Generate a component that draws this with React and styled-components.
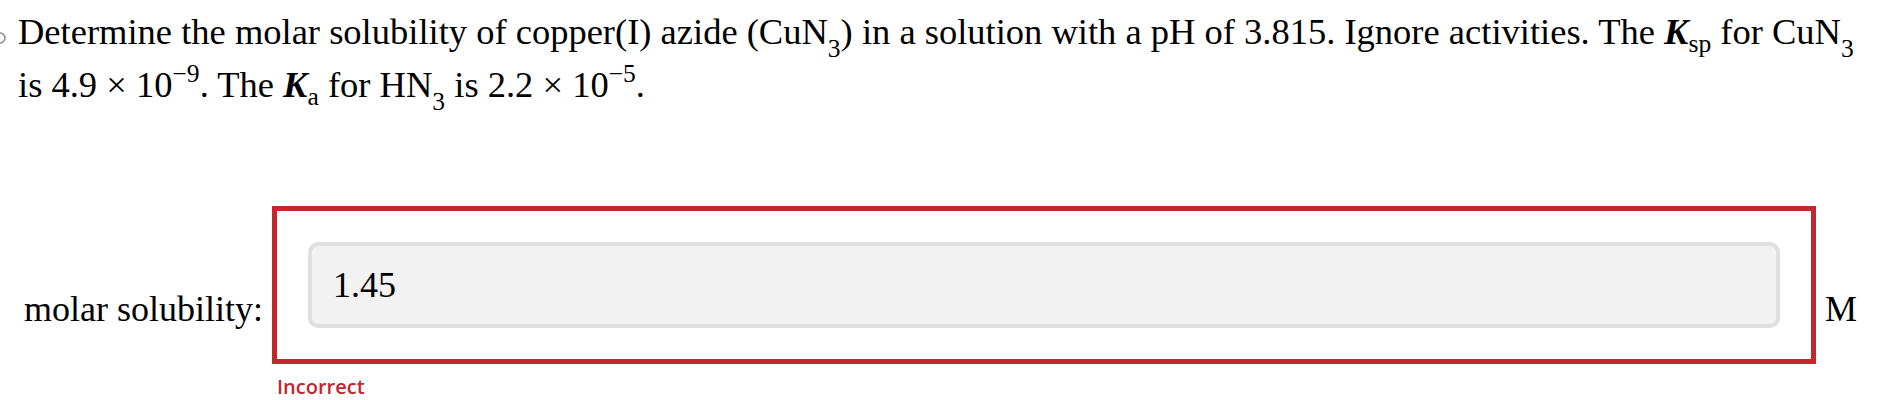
import React from "react";
import styled, { createGlobalStyle } from "styled-components";

const GlobalStyle = createGlobalStyle`
  html, body {
    margin: 0;
    padding: 0;
    background: #ffffff;
  }
  body {
    font-family: "Liberation Serif", "Times New Roman", serif;
    color: #000000;
  }
`;

const Page = styled.div`
  width: 1878px;
  height: 400px;
  box-sizing: border-box;
  padding: 5px 21px 0 14px;
  overflow: hidden;
`;

const Question = styled.p`
  position: relative;
  margin: 0 0 0 4px;
  font-size: 36.5px;
  line-height: 53px;
`;

const Marker = styled.svg`
  position: absolute;
  left: -18px;
  top: 26px;
`;

const K = styled.i`
  font-weight: bold;
`;

const Sub = styled.sub`
  font-size: 0.7em;
  line-height: 0;
  vertical-align: ${(props) => (props.$low ? "-0.5em" : "-0.3em")};
`;

const Sup = styled.sup`
  font-size: 0.7em;
  line-height: 0;
  vertical-align: 0.6em;
`;

const AnswerRow = styled.div`
  display: flex;
  align-items: flex-start;
  margin-top: 95px;
`;

const Label = styled.label`
  margin: 85px 9px 0 10px;
  font-size: 36px;
  line-height: 36px;
  white-space: nowrap;
`;

const Field = styled.div`
  flex: 1;
  display: flex;
  flex-direction: column;
`;

const Frame = styled.div`
  border: 5px solid #c1272d;
  padding: 31px;
`;

const Input = styled.div`
  height: 86px;
  box-sizing: border-box;
  border: 4px solid #dfdfdf;
  border-radius: 10px;
  background: #f2f2f2;
  padding-left: 21px;
  display: flex;
  align-items: center;
  font-size: 36px;
`;

const Feedback = styled.div`
  margin-top: 9px;
  padding-left: 5px;
  font-family: "Open Sans", "Liberation Sans", sans-serif;
  font-weight: 600;
  font-size: 20px;
  line-height: 28px;
  color: #c1272d;
`;

const Unit = styled.span`
  margin: 85px 0 0 9px;
  font-size: 36px;
  line-height: 36px;
`;

export default function App() {
  return (
    <>
      <GlobalStyle />
      <Page>
        <Question>
          <Marker width="6" height="14" viewBox="0 0 6 14">
            <circle cx="0" cy="7" r="5" fill="none" stroke="#8a8a8a" strokeWidth="1.5" />
          </Marker>
          Determine the molar solubility of copper(I) azide (CuN<Sub $low>3</Sub>) in a
          solution with a pH of 3.815. Ignore activities. The <K>K</K>
          <Sub>sp</Sub> for CuN<Sub $low>3</Sub> is 4.9 × 10<Sup>−9</Sup>. The{" "}
          <K>K</K>
          <Sub>a</Sub> for HN<Sub $low>3</Sub> is 2.2 × 10<Sup>−5</Sup>.
        </Question>
        <AnswerRow>
          <Label>molar solubility:</Label>
          <Field>
            <Frame>
              <Input>1.45</Input>
            </Frame>
            <Feedback>Incorrect</Feedback>
          </Field>
          <Unit>M</Unit>
        </AnswerRow>
      </Page>
    </>
  );
}
